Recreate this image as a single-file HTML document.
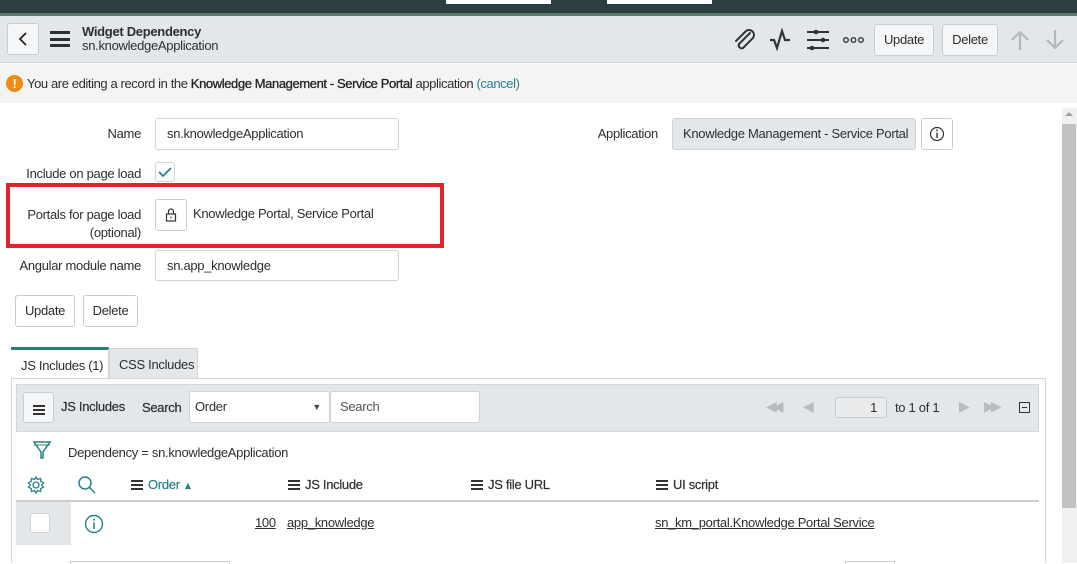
<!DOCTYPE html>
<html><head><style>
*{box-sizing:border-box;margin:0;padding:0}
body{width:1077px;height:563px;overflow:hidden;position:relative;background:#fff;font-family:"Liberation Sans",sans-serif;font-size:13px;color:#2e2e2e;letter-spacing:-0.3px}
.a{position:absolute}
.btn{position:absolute;border:1px solid #c8ccd0;border-radius:3px;background:#f5f6f7;text-align:center;font-size:13px;color:#2e2e2e}
.inp{position:absolute;border:1px solid #cfd3d6;border-radius:3px;background:#fff;padding-left:11px;font-size:13px}
.lbl{position:absolute;text-align:right;font-size:13px}
.hb{display:inline-block;width:12px;height:10px;border-top:2px solid #333;border-bottom:2px solid #333;position:relative;vertical-align:-1px;margin-right:5px}
.hb:after{content:"";position:absolute;left:0;right:0;top:2px;border-top:2px solid #333}
u{text-decoration:underline}
</style></head><body>
<div class="a" style="left:0;top:0;width:1077px;height:13px;background:#2d3e42"></div>
<div class="a" style="left:446px;top:0;width:105px;height:4px;background:#fff"></div>
<div class="a" style="left:607px;top:0;width:105px;height:4px;background:#fff"></div>
<div class="a" style="left:0;top:13px;width:1077px;height:3px;background:#5b7b6c"></div>
<div class="a" style="left:0;top:16px;width:1077px;height:47px;background:#e4e7ea;border-bottom:1px solid #cdd1d4"></div>
<div class="btn" style="left:7px;top:23px;width:32px;height:32px"><svg width="30" height="30"><path d="M18 9L12 15L18 21" fill="none" stroke="#222" stroke-width="1.8"/></svg></div>
<div class="a" style="left:50px;top:31px;width:20px;height:16px;border-top:3px solid #2e2e2e;border-bottom:3px solid #2e2e2e"><div style="margin-top:3.5px;border-top:3px solid #2e2e2e"></div></div>
<div class="a" style="left:82px;top:24px;font-size:13px;font-weight:bold;line-height:15px">Widget Dependency</div>
<div class="a" style="left:82px;top:38px;font-size:13px;line-height:15px">sn.knowledgeApplication</div>
<svg class="a" style="left:730px;top:28px" width="28" height="24" viewBox="0 0 28 24"><path d="M20 5 L9 16 a3 3 0 0 0 4 4 L23 10 a5 5 0 0 0 -7 -7 L6 13" fill="none" stroke="#333" stroke-width="2" stroke-linecap="round"/></svg>
<svg class="a" style="left:769px;top:28px" width="24" height="24" viewBox="0 0 24 24"><path d="M1 12 L5 12 L8 20 L13 3 L16 12 L21 12" fill="none" stroke="#333" stroke-width="2.2"/></svg>
<svg class="a" style="left:806px;top:28px" width="24" height="24" viewBox="0 0 24 24"><path d="M1 4H23M1 12H23M1 20H23" stroke="#333" stroke-width="2"/><circle cx="10" cy="4" r="2.3" fill="#333"/><circle cx="17" cy="12" r="2.3" fill="#333"/><circle cx="6" cy="20" r="2.3" fill="#333"/></svg>
<svg class="a" style="left:843px;top:35px" width="22" height="10"><circle cx="3" cy="5" r="2.3" fill="none" stroke="#333" stroke-width="1.4"/><circle cx="10.5" cy="5" r="2.3" fill="none" stroke="#333" stroke-width="1.4"/><circle cx="18" cy="5" r="2.3" fill="none" stroke="#333" stroke-width="1.4"/></svg>
<div class="btn" style="left:874px;top:24px;width:60px;height:32px;line-height:30px">Update</div>
<div class="btn" style="left:942px;top:24px;width:56px;height:32px;line-height:30px">Delete</div>
<svg class="a" style="left:1009px;top:29px" width="22" height="22" viewBox="0 0 22 22"><path d="M11 21V3M3 11L11 3L19 11" fill="none" stroke="#b4b8bc" stroke-width="2.2"/></svg>
<svg class="a" style="left:1044px;top:29px" width="22" height="22" viewBox="0 0 22 22"><path d="M11 1V19M3 11L11 19L19 11" fill="none" stroke="#b4b8bc" stroke-width="2.2"/></svg>
<div class="a" style="left:0;top:64px;width:1077px;height:39px;background:#f4f4f4"></div>
<div class="a" style="left:6px;top:75px;width:17px;height:17px;border-radius:50%;background:#f08a16;color:#fff;font-weight:bold;font-size:13px;text-align:center;line-height:17px">!</div>
<div class="a" style="left:27px;top:76px;line-height:15px;letter-spacing:-0.4px">You are editing a record in the <span style="color:#222;-webkit-text-stroke:0.3px #222">Knowledge Management - Service Portal</span> application <span style="color:#278287">(cancel)</span></div>
<div class="a" style="left:1062px;top:108px;width:15px;height:455px;background:#f1f1f1"></div>
<div class="a" style="left:1062px;top:124px;width:14px;height:384px;background:#c1c1c1"></div>
<div class="a" style="left:1065px;top:112px;border:4px solid transparent;border-bottom:4px solid #a0a0a0;border-top:0"></div>
<div class="lbl" style="left:0;top:126px;width:141px">Name</div>
<div class="inp" style="left:155px;top:118px;width:244px;height:32px;line-height:30px">sn.knowledgeApplication</div>
<div class="lbl" style="left:480px;top:126px;width:178px">Application</div>
<div class="inp" style="left:672px;top:118px;width:244px;height:32px;line-height:30px;background:#e5e8eb;padding-left:10px">Knowledge Management - Service Portal</div>
<div class="btn" style="left:921px;top:118px;width:32px;height:32px;background:#fff"><svg width="30" height="30"><circle cx="15" cy="15" r="6.5" fill="none" stroke="#333" stroke-width="1.2"/><path d="M15 13.5V19" stroke="#333" stroke-width="1.4"/><circle cx="15" cy="11.3" r=".9" fill="#333"/></svg></div>
<div class="lbl" style="left:0;top:166px;width:141px">Include on page load</div>
<div class="a" style="left:155px;top:162px;width:20px;height:20px;border:1px solid #cfd3d6;border-radius:3px"><svg width="18" height="18"><path d="M3 9L7 13L15 5" fill="none" stroke="#278287" stroke-width="1.8"/></svg></div>
<div class="a" style="left:6px;top:183px;width:438px;height:65px;border:4px solid #e3222d"></div>
<div class="lbl" style="left:0;top:206px;width:141px;line-height:18px">Portals for page load<br>(optional)</div>
<div class="btn" style="left:155px;top:199px;width:32px;height:32px;background:#fff"><svg width="30" height="30"><rect x="10.5" y="14" width="9" height="7" fill="none" stroke="#333" stroke-width="1.2"/><path d="M12.5 14V11.5a2.5 2.5 0 0 1 5 0V14" fill="none" stroke="#333" stroke-width="1.2"/><path d="M15 16.5v2" stroke="#333"/></svg></div>
<div class="a" style="left:193px;top:206px">Knowledge Portal, Service Portal</div>
<div class="lbl" style="left:0;top:258px;width:141px">Angular module name</div>
<div class="inp" style="left:155px;top:250px;width:244px;height:31px;line-height:29px">sn.app_knowledge</div>
<div class="btn" style="left:15px;top:295px;width:60px;height:32px;line-height:30px;background:#fff">Update</div>
<div class="btn" style="left:83px;top:295px;width:55px;height:32px;line-height:30px;background:#fff">Delete</div>
<div class="a" style="left:11px;top:347px;width:98px;height:33px;border-top:3px solid #2b7c77;background:#fff;border-right:1px solid #d4d7da;padding:8px 0 0 10px">JS Includes (1)</div>
<div class="a" style="left:109px;top:348px;width:89px;height:31px;background:#e4e7ea;border:1px solid #d4d7da;border-bottom:0;padding:8px 0 0 9px">CSS Includes</div>
<div class="a" style="left:11px;top:378px;width:1035px;height:1px;background:#d4d7da"></div>
<div class="a" style="left:11px;top:378px;width:1px;height:185px;background:#d4d7da"></div>
<div class="a" style="left:1045px;top:378px;width:1px;height:185px;background:#d4d7da"></div>
<div class="a" style="left:16px;top:384px;width:1023px;height:48px;background:#e4e7ea;border:1px solid #d4d7da"></div>
<div class="btn" style="left:23px;top:392px;width:31px;height:31px;padding-top:9px"><span class="hb" style="margin:0"></span></div>
<div class="a" style="left:61px;top:399px;-webkit-text-stroke:0.2px #2e2e2e">JS Includes</div>
<div class="a" style="left:142px;top:400px;-webkit-text-stroke:0.2px #2e2e2e">Search</div>
<div class="inp" style="left:189px;top:391px;width:141px;height:32px;line-height:30px;padding-left:5px">Order<span style="position:absolute;right:8px;font-size:9px;color:#444">&#9660;</span></div>
<div class="inp" style="left:330px;top:391px;width:150px;height:32px;line-height:30px;padding-left:9px;color:#555">Search</div>
<div class="a" style="left:766px;top:398px;color:#b8bcc0;font-size:14px;letter-spacing:-4px">&#9664;&#9664;</div>
<div class="a" style="left:803px;top:398px;color:#b8bcc0;font-size:14px">&#9664;</div>
<div class="a" style="left:835px;top:397px;width:52px;height:21px;border:1px solid #c8ccd0;border-radius:3px;text-align:right;padding-right:9px;line-height:19px;background:#e9ebed">1</div>
<div class="a" style="left:895px;top:400px">to 1 of 1</div>
<div class="a" style="left:959px;top:398px;color:#b8bcc0;font-size:14px">&#9654;</div>
<div class="a" style="left:984px;top:398px;color:#b8bcc0;font-size:14px;letter-spacing:-4px">&#9654;&#9654;</div>
<div class="a" style="left:1019px;top:402px;width:11px;height:11px;border:1px solid #333"><div style="margin:4px 2px 0;border-top:1px solid #333"></div></div>
<svg class="a" style="left:32px;top:440px" width="20" height="24" viewBox="0 0 20 24"><path d="M2 2H18L11 12V18H9V12Z" fill="none" stroke="#278287" stroke-width="1.5"/><path d="M2 5H18" stroke="#278287"/></svg>
<div class="a" style="left:68px;top:445px">Dependency = sn.knowledgeApplication</div>
<svg class="a" style="left:26px;top:475px" width="20" height="20" viewBox="0 0 20 20"><circle cx="10" cy="10" r="3" fill="none" stroke="#278287" stroke-width="1.3"/><path d="M10 2l1.5 2.5 3-1 .3 3 2.7 1.3-1.8 2.2 1.8 2.2-2.7 1.3-.3 3-3-1L10 18l-1.5-2.5-3 1-.3-3L2.5 12.2 4.3 10 2.5 7.8 5.2 6.5l.3-3 3 1Z" fill="none" stroke="#278287" stroke-width="1.3"/></svg>
<svg class="a" style="left:77px;top:475px" width="20" height="20" viewBox="0 0 20 20"><circle cx="8" cy="8" r="6" fill="none" stroke="#278287" stroke-width="1.5"/><path d="M12.5 12.5L18 18" stroke="#278287" stroke-width="1.5"/></svg>
<div class="a" style="left:131px;top:477px;color:#278287;-webkit-text-stroke:0.2px #278287"><span class="hb"></span>Order <span style="font-size:10px">&#9650;</span></div>
<div class="a" style="left:288px;top:477px;-webkit-text-stroke:0.2px #2e2e2e"><span class="hb"></span>JS Include</div>
<div class="a" style="left:471px;top:477px;-webkit-text-stroke:0.2px #2e2e2e"><span class="hb"></span>JS file URL</div>
<div class="a" style="left:656px;top:477px;-webkit-text-stroke:0.2px #2e2e2e"><span class="hb"></span>UI script</div>
<div class="a" style="left:16px;top:500px;width:1023px;height:2px;background:#ccc"></div>
<div class="a" style="left:16px;top:502px;width:55px;height:43px;background:#e4e7ea"></div>
<div class="a" style="left:30px;top:513px;width:20px;height:20px;border:1px solid #cfd3d6;border-radius:3px;background:#fff"></div>
<svg class="a" style="left:84px;top:514px" width="20" height="20"><circle cx="10" cy="10" r="8.5" fill="none" stroke="#278287" stroke-width="1.4"/><path d="M10 8.5V15" stroke="#278287" stroke-width="1.6"/><circle cx="10" cy="5.8" r="1" fill="#278287"/></svg>
<div class="a" style="left:255px;top:515px"><u>100</u></div>
<div class="a" style="left:287px;top:515px"><u>app_knowledge</u></div>
<div class="a" style="left:655px;top:515px"><u>sn_km_portal.Knowledge Portal Service</u></div>
<div class="a" style="left:70px;top:561px;width:160px;height:3px;border:1px solid #ccc;border-bottom:0"></div>
<div class="a" style="left:845px;top:561px;width:50px;height:3px;border:1px solid #ccc;border-bottom:0"></div>
</body></html>
